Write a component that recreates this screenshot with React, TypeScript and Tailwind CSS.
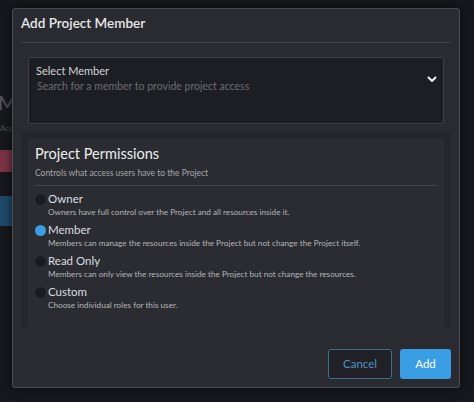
import { useState } from 'react';

type Role = 'owner' | 'member' | 'readonly' | 'custom';

const roles: { id: Role; label: string; description: string }[] = [
  {
    id: 'owner',
    label: 'Owner',
    description: 'Owners have full control over the Project and all resources inside it.',
  },
  {
    id: 'member',
    label: 'Member',
    description: 'Members can manage the resources inside the Project but not change the Project itself.',
  },
  {
    id: 'readonly',
    label: 'Read Only',
    description: 'Members can only view the resources inside the Project but not change the resources.',
  },
  {
    id: 'custom',
    label: 'Custom',
    description: 'Choose individual roles for this user.',
  },
];

export default function App() {
  const [role, setRole] = useState<Role>('member');

  return (
    <div
      className="relative w-[474px] h-[402px] overflow-hidden bg-[#17181d]"
      style={{ fontFamily: 'Lato, "Noto Sans", sans-serif' }}
    >
      {/* page content sitting behind the dialog */}
      <div className="pt-[92px]">
        <p className="text-[20px] text-[#55565d] leading-none -ml-[2px] whitespace-nowrap">Members</p>
        <p className="mt-[10px] text-[8px] text-[#4f5056] whitespace-nowrap">Access to projects</p>
        <div className="mt-[16px] w-[30px] h-[22px] bg-[#7c3346]" />
        <div className="mt-[24px] w-[30px] h-[30px] bg-[#1e4a6b]" />
      </div>

      {/* dialog */}
      <div className="absolute left-[12px] top-[8px] w-[448px] h-[380px] rounded-[3px] border border-[#4b4c53] bg-[#2a2b30] shadow-[0_0_12px_rgba(0,0,0,0.6)] flex flex-col">
        <div className="px-[8px] pt-[6px]">
          <h2 className="text-[13.5px] font-semibold text-[#e8e8ea] leading-[17px]">Add Project Member</h2>
          <div className="mt-[10px] h-px bg-[#44454b]" />
        </div>

        <div className="mt-[14px] mx-[15px] h-[67px] rounded-[2px] border border-[#3e3f45] bg-[#1d1e23] relative">
          <p className="absolute left-[7px] top-[5px] text-[11px] text-[#d2d3d6]">Select Member</p>
          <p className="absolute left-[8px] top-[21px] text-[10.5px] text-[#6c6d73]">
            Search for a member to provide project access
          </p>
          <svg
            className="absolute right-[5px] top-[15px]"
            width="12"
            height="12"
            viewBox="0 0 12 12"
            fill="none"
            stroke="#f2f2f4"
            strokeWidth="2"
            strokeLinecap="round"
            strokeLinejoin="round"
          >
            <path d="M2.5 4.5 6 8l3.5-3.5" />
          </svg>
        </div>

        <div className="mt-[7px] mx-[8px] h-[196px] bg-[#25262b] px-[7px] pt-[8px] flex">
          <div className="flex-1 bg-[#2b2c31] px-[7px] pt-[6px]">
            <h3 className="text-[14.5px] text-[#eeeef0] leading-[18px]">Project Permissions</h3>
            <p className="mt-[4px] text-[8.5px] text-[#a5a6ab]">Controls what access users have to the Project</p>
            <div className="mt-[5px] h-px bg-[#45464c]" />
            <div className="mt-[5px] flex flex-col gap-[4px]">
              {roles.map((r) => (
                <button
                  key={r.id}
                  onClick={() => setRole(r.id)}
                  className="flex items-start gap-[2px] text-left"
                >
                  <span
                    className={
                      role === r.id
                        ? 'block mt-[3px] w-[11px] h-[11px] rounded-full bg-[#3a9ee4] shrink-0'
                        : 'block mt-[3px] w-[11px] h-[11px] rounded-full bg-[#1a1b1e] shadow-[0_0_0_1px_#303136] shrink-0'
                    }
                  />
                  <span className="flex flex-col">
                    <span className="text-[11.5px] text-[#dcdde0] leading-[16px]">{r.label}</span>
                    <span className="text-[8.2px] text-[#b4b5ba] leading-[11px]">{r.description}</span>
                  </span>
                </button>
              ))}
            </div>
          </div>
        </div>

        <div className="mt-auto mb-[8px] mr-[8px] flex justify-end gap-[8px]">
          <button className="w-[64px] h-[30px] rounded-[3px] border border-[#3f6f8e] bg-[#202127] text-[11.5px] text-[#4e93c4]">
            Cancel
          </button>
          <button className="w-[51px] h-[30px] rounded-[3px] bg-[#3a9ee4] text-[11.5px] text-white">
            Add
          </button>
        </div>
      </div>
    </div>
  );
}
